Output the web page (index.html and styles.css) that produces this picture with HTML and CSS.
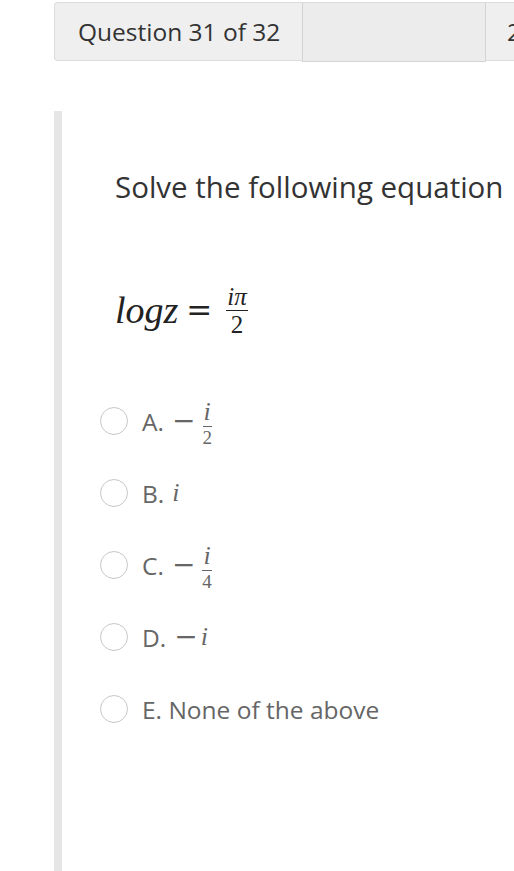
FILE: index.html
```html
<!DOCTYPE html>
<html lang="en">
<head>
  <meta charset="UTF-8">
  <meta name="viewport" content="width=device-width, initial-scale=1.0">
  <title>Quiz</title>
  <link rel="stylesheet" href="styles.css">
</head>
<body>

<!-- Progress bar -->
<div class="quiz-nav">
  <div class="nav-count">Question 31 of 32</div>
  <div class="nav-progress"></div>
  <div class="nav-timer">2</div>
</div>

<!-- Question -->
<div class="question">
  <p class="question-text">Solve the following equation</p>

  <div class="equation">
    <span class="mi">logz</span>
    <span class="mo">=</span>
    <span class="frac big">
      <span class="num"><span class="mi">i&pi;</span></span>
      <span class="den">2</span>
    </span>
  </div>

  <ul class="answers">
    <li>
      <span class="radio"></span>
      <span class="label">A.</span>
      <span class="mo minus">&minus;</span>
      <span class="frac">
        <span class="num"><span class="mi">i</span></span>
        <span class="den">2</span>
      </span>
    </li>
    <li>
      <span class="radio"></span>
      <span class="label">B.</span>
      <span class="mi">i</span>
    </li>
    <li>
      <span class="radio"></span>
      <span class="label">C.</span>
      <span class="mo minus">&minus;</span>
      <span class="frac">
        <span class="num"><span class="mi">i</span></span>
        <span class="den">4</span>
      </span>
    </li>
    <li>
      <span class="radio"></span>
      <span class="label">D.</span>
      <span class="mo minus tight">&minus;</span><span class="mi">i</span>
    </li>
    <li>
      <span class="radio"></span>
      <span class="label">E. None of the above</span>
    </li>
  </ul>
</div>

</body>
</html>
```

FILE: styles.css
```css
body {
  margin: 0;
  padding: 0;
  background-color: #fff;
  font-family: "Open Sans", Arial, sans-serif;
  color: #333;
  overflow: hidden;
  height: 871px;
}

/* top nav */
.quiz-nav {
  display: flex;
  height: 57px;
  margin: 2px 0 0 54px;
  background-color: #efefef;
  border: 1px solid #dcdcdc;
  border-right: none;
  border-radius: 4px 0 0 4px;
  white-space: nowrap;
}

.nav-count {
  flex-shrink: 0;
  width: 224px;
  padding-left: 23px;
  font-size: 24.5px;
  line-height: 57px;
  color: #333;
}

.nav-progress {
  flex-shrink: 0;
  width: 182px;
  height: 58px;
  background-color: #ececec;
  border-left: 1px solid #d4d4d4;
  border-right: 1px solid #d4d4d4;
  border-bottom: 1px solid #d4d4d4;
}

.nav-timer {
  flex-shrink: 0;
  padding-left: 21px;
  font-size: 24.5px;
  line-height: 57px;
  color: #333;
}

/* question area */
.question {
  margin: 50px 0 0 54px;
  border-left: 8px solid #e6e6e6;
  padding-left: 53px;
  height: 760px;
}

.question-text {
  margin: 0;
  padding-top: 56px;
  font-size: 29.5px;
  line-height: 40px;
  color: #333;
  white-space: nowrap;
}

/* math */
.mi {
  font-family: "Liberation Serif", "DejaVu Serif", serif;
  font-style: italic;
}

.mo {
  font-family: "DejaVu Serif", "Liberation Serif", serif;
}

.equation {
  margin-top: 76px;
  display: flex;
  align-items: center;
  font-size: 38px;
  color: #222;
}

.equation .mo {
  margin: 0 14px 0 8px;
  font-size: 31px;
  font-weight: 300;
}

.frac {
  display: inline-flex;
  flex-direction: column;
  align-items: center;
  line-height: 1;
}

.frac .num {
  padding: 0 1px 1px;
  border-bottom: 1px solid currentColor;
}

.frac .den {
  font-family: "Liberation Serif", "DejaVu Serif", serif;
  padding-top: 1px;
}

.frac.big {
  font-size: 25px;
}

/* answers */
.answers {
  list-style: none;
  margin: 48px 0 0 -15px;
  padding: 0;
}

.answers li {
  display: flex;
  align-items: center;
  height: 72px;
  color: #666;
  font-size: 24.5px;
}

.radio {
  width: 26px;
  height: 26px;
  border: 1px solid #c8c8c8;
  border-radius: 50%;
  margin-right: 14px;
  flex-shrink: 0;
}

.label {
  margin-right: 8px;
}

.answers .mi {
  font-size: 26px;
}

.answers .minus {
  font-size: 28px;
  line-height: 1;
  margin-right: 7px;
}

.answers .minus.tight {
  margin-right: 3px;
}

.answers .frac {
  font-size: 19px;
  margin-top: 4px;
}
```
